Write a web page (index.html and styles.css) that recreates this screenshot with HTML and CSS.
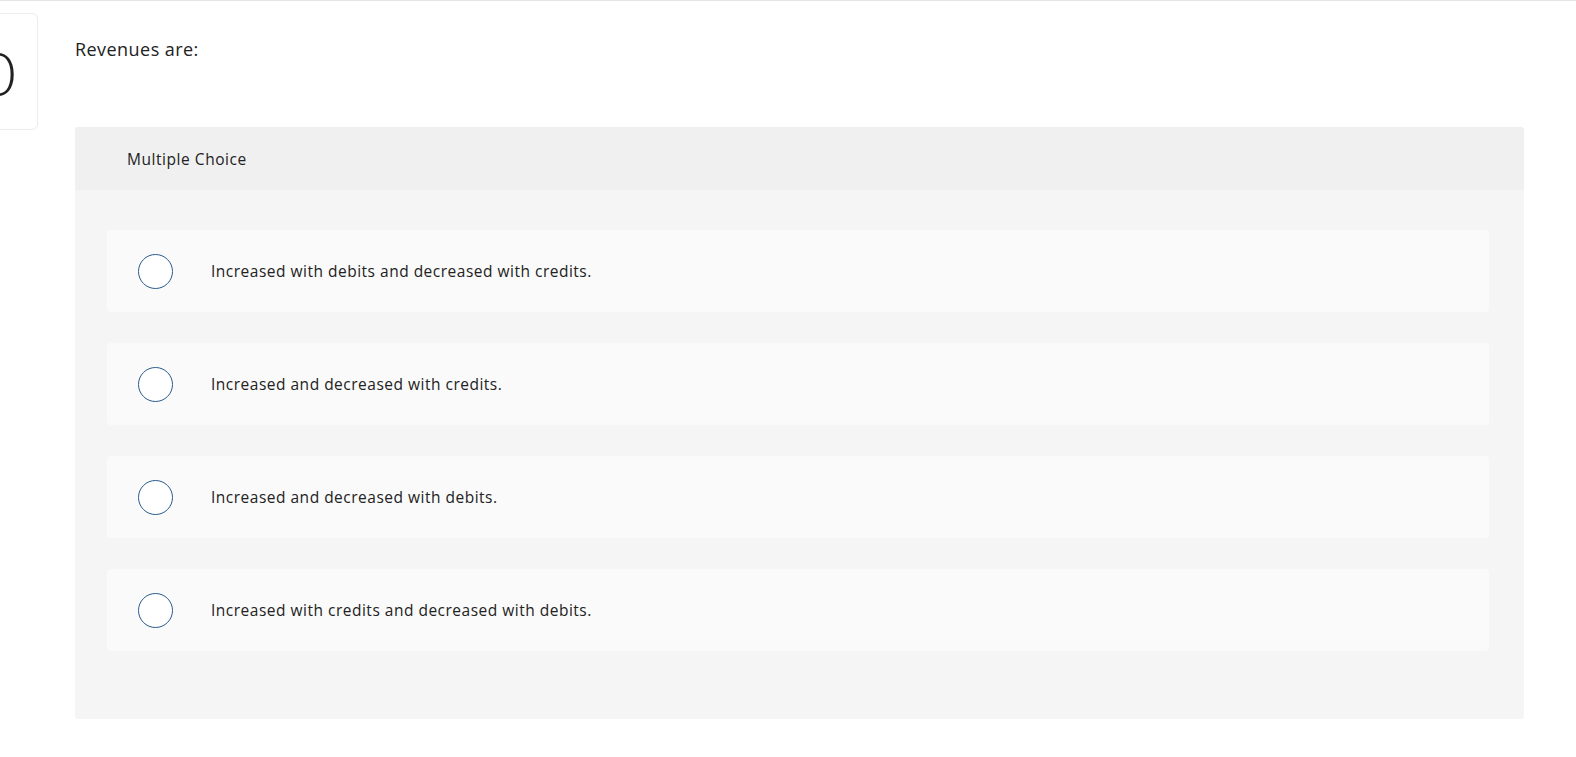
FILE: index.html
```html
<!DOCTYPE html>
<html lang="en">
<head>
<meta charset="utf-8">
<title>Question</title>
<link rel="stylesheet" href="styles.css">
</head>
<body>
<div class="topline"></div>
<div class="page">
  <div class="qnum"><span>0</span></div>
  <div class="content">
    <p class="prompt">Revenues are:</p>
    <div class="panel">
      <div class="panel-head">Multiple Choice</div>
      <div class="panel-body">
        <div class="option"><span class="radio"></span><span class="label">Increased with debits and decreased with credits.</span></div>
        <div class="option"><span class="radio"></span><span class="label">Increased and decreased with credits.</span></div>
        <div class="option"><span class="radio"></span><span class="label">Increased and decreased with debits.</span></div>
        <div class="option"><span class="radio"></span><span class="label">Increased with credits and decreased with debits.</span></div>
      </div>
    </div>
  </div>
</div>
</body>
</html>
```
FILE: styles.css
```css
html, body {
  margin: 0;
  padding: 0;
  background: #ffffff;
  font-family: "Open Sans", "Liberation Sans", sans-serif;
  color: #222222;
  overflow: hidden;
}
.topline {
  height: 1px;
  background: #e6e6e6;
}
.page {
  display: flex;
  align-items: flex-start;
}
.qnum {
  flex: 0 0 auto;
  width: 80px;
  height: 117px;
  margin-left: -42px;
  margin-top: 12px;
  border: 1px solid #ececec;
  border-radius: 6px;
  display: flex;
  align-items: center;
  justify-content: center;
  box-sizing: border-box;
}
.qnum span {
  font-family: "Lato", sans-serif;
  font-size: 62px;
  font-weight: 300;
  line-height: 1;
  color: #222;
}
.content {
  flex: 1 1 auto;
  margin-left: 37px;
  margin-right: 52px;
}
.prompt {
  margin: 36px 0 0 0;
  font-size: 18px;
  letter-spacing: 0.45px;
  line-height: 24px;
  height: 90px;
}
.panel {
  border-radius: 3px;
  overflow: hidden;
  background: #f5f5f5;
}
.panel-head {
  height: 63px;
  background: #f0f0f0;
  display: flex;
  align-items: center;
  padding-left: 52px;
  font-size: 15.5px;
  letter-spacing: 0.55px;
  color: #222;
}
.panel-body {
  padding: 40px 35px 68px 32px;
  display: flex;
  flex-direction: column;
  gap: 31px;
}
.option {
  height: 82px;
  background: #fafafa;
  border-radius: 4px;
  display: flex;
  align-items: center;
  padding-left: 31px;
}
.radio {
  width: 35px;
  height: 35px;
  box-sizing: border-box;
  border: 1.5px solid #2a5b8c;
  border-radius: 50%;
  background: #fff;
  flex: 0 0 auto;
}
.label {
  margin-left: 38px;
  font-size: 15.5px;
  letter-spacing: 0.5px;
  color: #222;
}
```
